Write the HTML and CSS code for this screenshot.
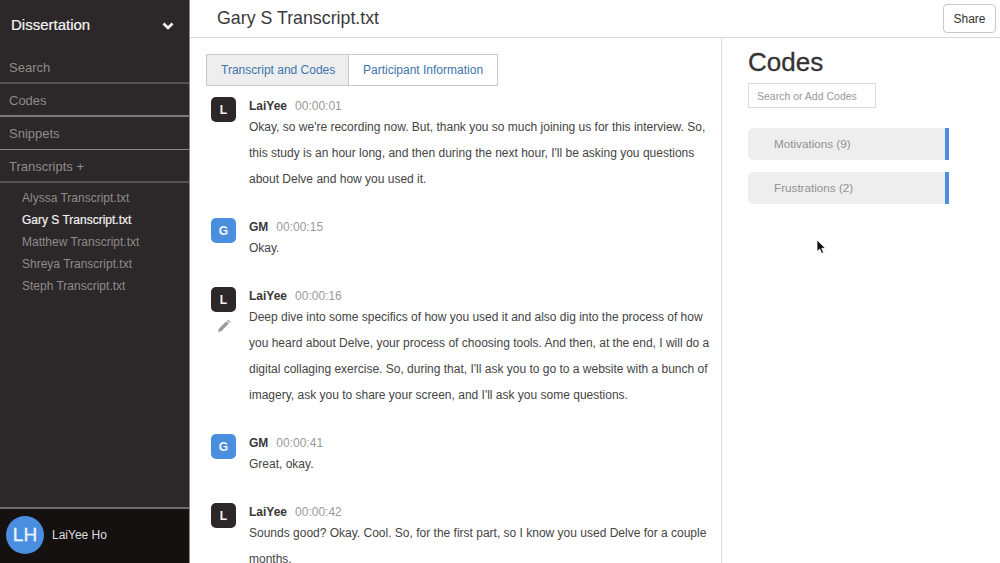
FILE: index.html
```html
<!DOCTYPE html>
<html lang="en">
<head>
<meta charset="utf-8">
<title>Gary S Transcript.txt</title>
<link rel="stylesheet" href="styles.css">
</head>
<body>
<div class="app">
  <aside class="sidebar">
    <div class="project">
      <span>Dissertation</span>
      <svg class="chevron" width="12" height="8" viewBox="0 0 12 8"><path d="M1.500 1.500 6 6l4.500-4.500" fill="none" stroke="#fff" stroke-width="2.600"/></svg>
    </div>
    <nav class="nav">
      <div class="nav-item nav-dim">Search</div>
      <div class="nav-item">Codes</div>
      <div class="nav-item nav-thin">Snippets</div>
      <div class="nav-item nav-dim">Transcripts +</div>
    </nav>
    <ul class="files">
      <li>Alyssa Transcript.txt</li>
      <li class="active">Gary S Transcript.txt</li>
      <li>Matthew Transcript.txt</li>
      <li>Shreya Transcript.txt</li>
      <li>Steph Transcript.txt</li>
    </ul>
    <div class="user">
      <div class="user-avatar">LH</div>
      <div class="user-name">LaiYee Ho</div>
    </div>
  </aside>
  <div class="content">
    <header class="topbar">
      <h1 class="title">Gary S Transcript.txt</h1>
      <button class="share">Share</button>
    </header>
    <div class="panes">
      <main class="transcript">
        <div class="tabs">
          <div class="tab tab-on">Transcript and Codes</div>
          <div class="tab">Participant Information</div>
        </div>
        <article class="msg">
          <div class="gutter"><div class="avatar dark">L</div></div>
          <div class="body">
            <div class="meta"><b>LaiYee</b><span>00:00:01</span></div>
            <p>Okay, so we're recording now. But, thank you so much joining us for this interview. So, this study is an hour long, and then during the next hour, I'll be asking you questions about Delve and how you used it.</p>
          </div>
        </article>
        <article class="msg">
          <div class="gutter"><div class="avatar blue">G</div></div>
          <div class="body">
            <div class="meta"><b>GM</b><span>00:00:15</span></div>
            <p>Okay.</p>
          </div>
        </article>
        <article class="msg">
          <div class="gutter">
            <div class="avatar dark">L</div>
            <svg class="pencil" width="14" height="14" viewBox="0 0 14 14"><path d="M1 13l.8-3.200 7.600-7.600 2.400 2.400-7.600 7.600z" fill="#9a9a9a"/><path d="M10.200 1.400l.9-.9 2.400 2.400-.9.9z" fill="#9a9a9a"/></svg>
          </div>
          <div class="body">
            <div class="meta"><b>LaiYee</b><span>00:00:16</span></div>
            <p>Deep dive into some specifics of how you used it and also dig into the process of how you heard about Delve, your process of choosing tools. And then, at the end, I will do a digital collaging exercise. So, during that, I'll ask you to go to a website with a bunch of imagery, ask you to share your screen, and I'll ask you some questions.</p>
          </div>
        </article>
        <article class="msg">
          <div class="gutter"><div class="avatar blue">G</div></div>
          <div class="body">
            <div class="meta"><b>GM</b><span>00:00:41</span></div>
            <p>Great, okay.</p>
          </div>
        </article>
        <article class="msg">
          <div class="gutter"><div class="avatar dark">L</div></div>
          <div class="body">
            <div class="meta"><b>LaiYee</b><span>00:00:42</span></div>
            <p>Sounds good? Okay. Cool. So, for the first part, so I know you used Delve for a couple months.</p>
          </div>
        </article>
      </main>
      <section class="codes">
        <h2>Codes</h2>
        <input class="code-search" type="text" placeholder="Search or Add Codes">
        <div class="code-list">
          <div class="code">Motivations (9)</div>
          <div class="code">Frustrations (2)</div>
        </div>
      </section>
    </div>
  </div>
  <svg class="cursor" width="11" height="16" viewBox="0 0 11 16"><path d="M1 1v11.500l2.800-2.500 1.800 4.400 2-.8L5.800 9.300H9.500z" fill="#111" stroke="#fff" stroke-width=".8"/></svg>
</div>
</body>
</html>
```
FILE: styles.css
```css
* { box-sizing: border-box; }
html, body { margin: 0; height: 100%; overflow: hidden; }
body { font-family: "Liberation Sans", Arial, sans-serif; color: #333; background: #fff; }
.app { display: flex; height: 563px; position: relative; }

.sidebar { width: 190px; flex: none; display: flex; flex-direction: column; background: #2c2728; border-right: 1px solid #8a8a8a; }
.project { height: 51px; padding: 0 15px 2px 11px; display: flex; align-items: center; justify-content: space-between; color: #f4f4f4; font-size: 15px; -webkit-text-stroke: .2px #f4f4f4; }
.chevron { margin-top: 3px; }
.nav-item { height: 33px; padding: 1px 0 0 9px; display: flex; align-items: center; font-size: 13px; color: #8e8b8b; border-bottom: 2px solid #7a7878; }
.nav-thin { border-bottom: 1px solid #8a8888; }
.nav-dim { border-bottom-color: #555253; }
.files { list-style: none; margin: 4px 0 0; padding: 0 0 0 22px; flex: 1; font-size: 12px; line-height: 22px; color: #8e8b8b; }
.files .active { color: #f2f2f2; -webkit-text-stroke: .2px #f2f2f2; }
.user { height: 56px; padding: 0 0 2px 6px; display: flex; align-items: center; gap: 8px; background: #141110; border-top: 2px solid #6d6b6b; }
.user-avatar { width: 38px; height: 38px; border-radius: 50%; background: #4a8fdf; color: #eef5fd; font-size: 19px; -webkit-text-stroke: .3px #eef5fd; display: flex; align-items: center; justify-content: center; }
.user-name { font-size: 12px; color: #dedede; }

.content { flex: 1; min-width: 0; display: flex; flex-direction: column; }
.topbar { height: 38px; flex: none; padding: 0 4px 0 27px; display: flex; align-items: center; justify-content: space-between; border-bottom: 1px solid #d8d8d8; }
.title { margin: 0; font-size: 17.800px; font-weight: 400; color: #3a3a3a; }
.share { width: 53px; height: 29px; padding: 0; background: #fff; border: 1px solid #c8c8c8; border-radius: 4px; font: 12px "Liberation Sans", Arial, sans-serif; color: #333; }
.panes { flex: 1; min-height: 0; display: flex; }

.transcript { width: 532px; flex: none; overflow: hidden; padding: 16px 0 0 16px; border-right: 1px solid #d8d8d8; }
.tabs { display: flex; height: 32px; margin-bottom: 11px; }
.tab { padding: 0 14px; display: flex; align-items: center; font-size: 12px; color: #3d74ad; border: 1px solid #c9c9c9; border-left-width: 0; white-space: nowrap; }
.tab-on { width: 143px; background: #eeeeee; border-left-width: 1px; }
.tab:not(.tab-on) { width: 149px; }
.msg { display: flex; padding-bottom: 26px; }
.gutter { width: 43px; flex: none; padding: 0 0 0 5px; display: flex; flex-direction: column; }
.avatar { width: 25px; height: 25px; border-radius: 5px; color: #f4f4f4; font-size: 12px; font-weight: 700; display: flex; align-items: center; justify-content: center; }
.dark { background: #2c2728; }
.blue { background: #4a8fdf; }
.pencil { margin: 7px 0 0 6px; }
.body { flex: 1; min-width: 0; padding-right: 8px; }
.meta { height: 17px; display: flex; align-items: center; gap: 8px; font-size: 12px; padding-top: 1px; }
.meta b { color: #3a3a3a; }
.meta span { color: #9a9a9a; }
.body p { margin: 0; font-size: 12px; line-height: 26px; color: #444; }

.codes { flex: 1; min-width: 0; padding: 9px 0 0 26px; }
.codes h2 { margin: 0 0 6px; font-size: 26px; line-height: 30px; font-weight: 400; color: #333; -webkit-text-stroke: .3px #333; }
.code-search { display: block; width: 128px; height: 25px; padding: 0 8px; border: 1px solid #dcdcdc; font: 10.500px "Liberation Sans", Arial, sans-serif; outline: none; }
.code-search::placeholder { color: #999; opacity: 1; }
.code-list { margin-top: 20px; display: flex; flex-direction: column; gap: 12px; }
.code { width: 201px; height: 32px; padding: 0 0 1px 26px; display: flex; align-items: center; font-size: 11.700px; color: #929292; background: #eeeeee; border-right: 4px solid #4a8fdf; border-radius: 5px 0 0 5px; }

.cursor { position: absolute; left: 816px; top: 239px; }
```
